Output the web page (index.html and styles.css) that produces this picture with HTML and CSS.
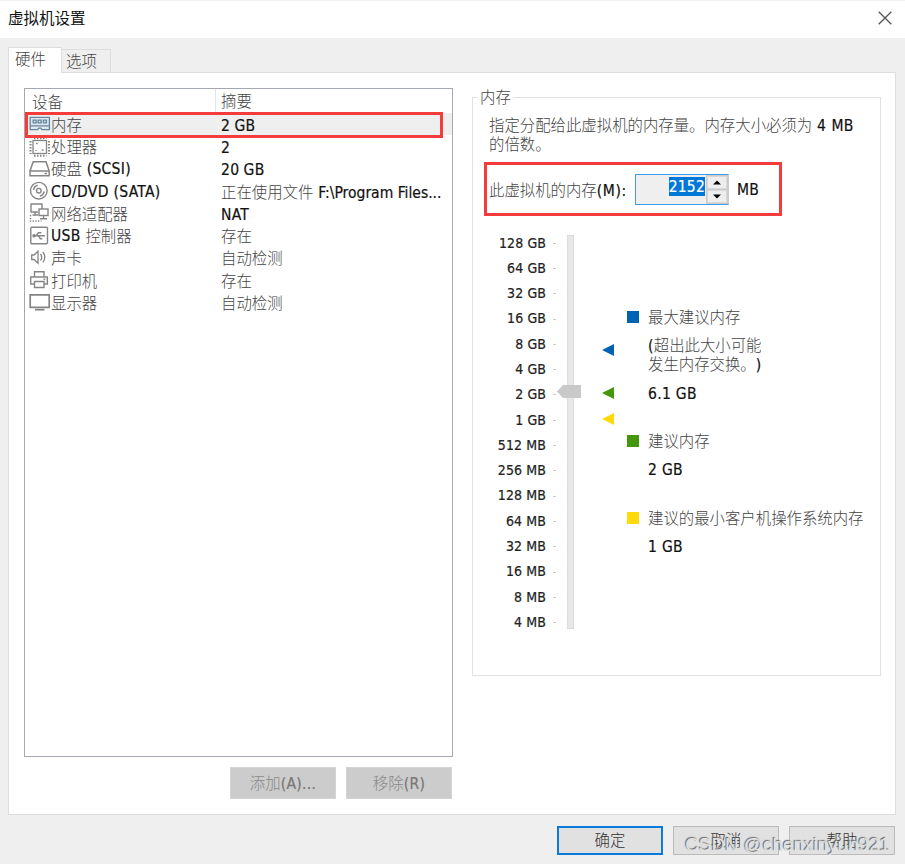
FILE: index.html
```html
<!DOCTYPE html>
<html lang="zh-CN">
<head>
<meta charset="utf-8">
<title>虚拟机设置</title>
<link rel="stylesheet" href="styles.css">
</head>
<body>
<div class="dialog">
  <header class="titlebar"><h1>虚拟机设置</h1>
    <svg class="close" width="14" height="14" viewBox="0 0 14 14"><path d="M.7.7l12.6 12.6M13.3.7L.7 13.3" stroke="#555" stroke-width="1.3"/></svg>
  </header>
  <nav class="tabs"><div class="tab active">硬件</div><div class="tab">选项</div></nav>
  <main class="panel">
    <section class="devices">
      <div class="list">
        <div class="row head"><span class="name">设备</span><span class="sum">摘要</span></div>
        <div class="row selected"><span class="name"><svg class="ic" viewBox="0 0 22 20"><g fill="none" stroke="#66869c" stroke-width="1.3"><path d="M1.2 3.4h19.2v12.3H13l-1.2-1.5h-2L8.6 15.7H1.2z" fill="#dde8f0"/><path d="M4.2 6.2h3v2.6h-3zM9.2 6.2h3v2.6h-3zM14.4 6.2h3v2.6h-3zM1.2 11.9h19"/></g></svg>内存</span><span class="sum"><b>2 GB</b></span></div>
        <div class="row"><span class="name"><svg class="ic" viewBox="0 0 22 20"><g fill="none" stroke="#858585" stroke-width="1.3"><rect x="4" y="3.5" width="13.5" height="13"/><path stroke-dasharray="1.5 1.5" stroke-width="2" d="M5 1.2h12.5M5 18.8h12.5M1.5 4v13M20 4v13"/><path d="M7 6.5h1.6M12.8 13h1.8M7 13v1"/></g></svg>处理器</span><span class="sum"><b>2</b></span></div>
        <div class="row"><span class="name"><svg class="ic" viewBox="0 0 22 20"><path d="M4.2 2.7h12.8L20.2 12v4.7H1V12zM1 12h19.2M15.5 14.5H18" fill="none" stroke="#858585" stroke-width="1.5"/></svg>硬盘 <b>(SCSI)</b></span><span class="sum"><b>20 GB</b></span></div>
        <div class="row"><span class="name"><svg class="ic" viewBox="0 0 22 20"><g fill="none" stroke="#858585" stroke-width="1.4"><circle cx="9.8" cy="9.7" r="8.3"/><circle cx="9.8" cy="9.7" r="2.3"/><path d="M4.5 9q.7-4 4.2-4.8M15.2 10.5q-.8 3.7-4.3 4.6"/></g></svg><b class="cd">CD/DVD (SATA)</b></span><span class="sum">正在使用文件 <b class="file">F:\Program Files...</b></span></div>
        <div class="row"><span class="name"><svg class="ic" viewBox="0 0 22 20"><g fill="none" stroke="#858585" stroke-width="1.4"><path d="M9 9H2V1h11v5M6 9v3M3.5 12H9"/><rect x="10" y="6" width="9" height="6.5"/><path d="M14.5 12.5v3M11 15.7h7"/><path stroke-dasharray="1.3 1.4" d="M1.5 12v6h11"/></g></svg>网络适配器</span><span class="sum"><b>NAT</b></span></div>
        <div class="row"><span class="name"><svg class="ic" viewBox="0 0 22 20"><g fill="none" stroke="#858585" stroke-width="1.4"><rect x="1.8" y="1.3" width="16.7" height="16.5" rx="1"/><path d="M5 9.7h11M7.3 9.7l2-3h3M9.3 9.7l2 3h2"/><circle cx="5" cy="9.7" r="1" fill="#858585"/></g></svg><b>USB</b> 控制器</span><span class="sum">存在</span></div>
        <div class="row"><span class="name"><svg class="ic" viewBox="0 0 22 20"><path d="M2.7 7H5l4-3.8v12L5 11.5H2.7zM11.5 6q2.5 3.3 0 6.5M13.8 4q4 5.2 0 10.3" fill="none" stroke="#858585" stroke-width="1.3"/></svg>声卡</span><span class="sum">自动检测</span></div>
        <div class="row"><span class="name"><svg class="ic" viewBox="0 0 22 20"><g fill="none" stroke="#858585" stroke-width="1.4"><path d="M5.5 7V1.8H15V7M5.5 14H1.7V7h16.6v7H15"/><path d="M5.5 11.5H15v6H5.5z"/><path d="M14.5 9.2h1.8"/></g></svg>打印机</span><span class="sum">存在</span></div>
        <div class="row"><span class="name"><svg class="ic" viewBox="0 0 22 20"><path d="M1.2 1.8h19v12.5h-19z" fill="none" stroke="#858585" stroke-width="1.7"/><path d="M6 16.7h9.5" stroke="#858585" stroke-width="1.8"/></svg>显示器</span><span class="sum">自动检测</span></div>
        <div class="mark"></div>
      </div>
      <div class="actions"><button class="flat">添加<b>(A)...</b></button><button class="flat">移除<b>(R)</b></button></div>
    </section>
    <section class="group">
      <h2>内存</h2>
      <p class="desc">指定分配给此虚拟机的内存量。内存大小必须为 <b>4 MB</b><br>的倍数。</p>
      <div class="amount">
        <span class="label">此虚拟机的内存<b>(M):</b></span>
        <div class="spin"><span class="field"><b>2152</b></span><span class="arrows"><i><svg width="8" height="5"><path d="M0 4.5L4 .5l4 4z"/></svg></i><i><svg width="8" height="5"><path d="M0 .5h8l-4 4z"/></svg></i></span></div>
        <b class="unit">MB</b>
      </div>
      <div class="scale">
        <div class="steps"><b>128 GB</b><b>64 GB</b><b>32 GB</b><b>16 GB</b><b>8 GB</b><b>4 GB</b><b>2 GB</b><b>1 GB</b><b>512 MB</b><b>256 MB</b><b>128 MB</b><b>64 MB</b><b>32 MB</b><b>16 MB</b><b>8 MB</b><b>4 MB</b></div>
        <div class="track"><svg class="thumb" width="24" height="13"><path d="M0 6.5L6 0h18v13H6z" fill="#c9c9c9"/></svg></div>
        <svg class="pointers" width="12" height="394"><path d="M0 115l12-6v12z" fill="#0063b1"/><path d="M0 158l12-6v12z" fill="#44960c"/><path d="M0 184l12-6v12z" fill="#ffd90a"/></svg>
        <div class="legend">
          <div class="item max"><i></i><div><p>最大建议内存</p><p class="note"><b>(</b>超出此大小可能<br>发生内存交换。<b>)</b></p><p><b>6.1 GB</b></p></div></div>
          <div class="item rec"><i></i><div><p>建议内存</p><p><b>2 GB</b></p></div></div>
          <div class="item min"><i></i><div><p>建议的最小客户机操作系统内存</p><p><b>1 GB</b></p></div></div>
        </div>
      </div>
    </section>
  </main>
  <footer class="footer"><button class="ok">确定</button><button>取消</button><button>帮助</button></footer>
  <div class="watermark">CSDN @chenxinyun921</div>
</div>
</body>
</html>
```

FILE: styles.css
```css
* { box-sizing: border-box; }
body { margin: 0; background: #efefef; font: 300 15.4px/20px "Noto Sans CJK SC", sans-serif; color: #444; text-spacing-trim: space-all; }
b { font: 15.5px/14px "DejaVu Sans Condensed", "Noto Sans", sans-serif; color: #111; letter-spacing: .3px; -webkit-text-stroke: .2px currentColor; }
h1, h2, p { margin: 0; font-weight: inherit; }
i { display: block; font-style: normal; }
.dialog { position: relative; width: 905px; height: 864px; overflow: hidden; }
.titlebar { height: 38px; background: #fff; border-top: 1px solid #f0f0f0; display: flex; justify-content: space-between; align-items: center; padding: 0 13px 3px 8px; }
.titlebar h1 { font-size: 15.5px; font-weight: 400; color: #111; margin-top: -2px; }
.tabs { height: 34px; padding: 9px 0 0 8px; display: flex; align-items: flex-end; }
.tab { height: 23px; width: 49px; padding: 0 0 0 4px; border: 1px solid #ddd; border-left: 0; border-bottom: 0; white-space: nowrap; }
.tab.active { width: 54px; height: 26px; margin-bottom: -1px; padding: 0 0 0 6px; background: #fff; border-left: 1px solid #ddd; position: relative; }
.panel { margin: 0 9px 0 8px; height: 743px; background: #fff; border: 1px solid #ddd; display: flex; padding: 15px 13px 0 15px; }
.devices { width: 429px; }
.list { position: relative; height: 669px; border: 1px solid #a3a8b3; background: #fff; }
.row { height: 22.3px; display: flex; align-items: center; white-space: nowrap; line-height: 18px; padding-bottom: 1px; }
.row.head { height: 24px; padding: 0; }
.head .name { padding: 0 0 0 7px; }
.head .sum { border-left: 1px solid #e4e4e4; height: 24px; line-height: 23px; padding-left: 5px; }
.row.selected { background: #efefef; }
.name { width: 190px; padding-left: 4px; display: flex; align-items: center; white-space: pre; word-spacing: 1.5px; }
.name b { padding-top: 2px; word-spacing: 0; }
.ic { width: 22px; height: 20px; flex: none; margin-left: -.5px; margin-right: .5px; position: relative; top: .6px; }
.sum { padding-left: 6px; word-spacing: 1.5px; }
.sum b { word-spacing: -.5px; }
.mark { position: absolute; border: 3px solid #f53c3c; left: 0; top: 23px; width: 418px; height: 26px; }
.sum .file { letter-spacing: 0; word-spacing: 0; }
.actions { display: flex; justify-content: flex-end; gap: 10px; margin: 10px 1px 0 0; }
button { width: 106px; height: 29px; border: 1px solid #bbb; background: #e1e1e1; padding: 0 0 3px; font: inherit; color: #333; }
.flat { height: 32px; background: #ccc; border-color: #d4d4d4; color: #888; padding: 0 0 2px; }
.flat b { color: #777; }
.group { width: 409px; height: 579px; margin: 9px 0 0 19px; border: 1px solid #e1e1e1; }
.group h2 { font-size: 15.4px; width: max-content; margin: -12px 0 0 5px; background: #fff; padding: 0 2px; }
.desc { height: 38px; margin: 9px 0 0 16px; line-height: 19px; white-space: nowrap; word-spacing: 1.5px; }
.desc b { word-spacing: .5px; }
.amount { margin: 9px 0 0 11px; width: 298px; height: 54px; border: 3px solid #f53c3c; display: flex; align-items: center; padding-left: 2px; }
.label { width: 146px; white-space: nowrap; }
.label b { letter-spacing: .6px; }
.spin { display: flex; width: 94px; height: 31px; border: 1px solid #3e9be6; border-right-color: #ccc; background: #efefef; }
.field { flex: 1; display: flex; justify-content: flex-end; padding-top: 2px; }
.field b { background: #0078d7; color: #fff; height: 19px; line-height: 20px; letter-spacing: .2px; }
.arrows { width: 22px; padding: 1px; background: #ccc; display: flex; flex-direction: column; gap: 1px; margin-left: 1px; }
.arrows i { flex: 1; background: #eee; border: 1px solid #d8d8d8; display: flex; align-items: center; justify-content: center; }
.unit { margin: 2px 0 0 8px; }
.scale { display: flex; margin-top: 19px; height: 394px; }
.steps { width: 83px; margin-top: -4.5px; display: flex; flex-direction: column; }
.steps b { height: 25.3px; line-height: 25.3px; font-size: 14px; letter-spacing: .1px; text-align: right; padding-right: 10px; color: #222; background: linear-gradient(#ccc, #ccc) no-repeat right 0 center / 3px 1px; }
.track { position: relative; width: 7px; margin-left: 11px; background: #e6e8e8; border: 1px solid #dcdede; }
.thumb { position: absolute; left: -11px; top: 149px; }
.pointers { margin-left: 28px; }
.legend { margin: 71px 0 0 13px; white-space: nowrap; }
.item { display: flex; }
.item > i { width: 12px; height: 12px; margin: 5px 9px 0 0; }
.item p { height: 20px; }
.item p + p { margin-top: 8px; }
.item p.note { height: 38px; line-height: 19px; margin: 9px 0 9px; }
.max i { background: #0063b1; } .rec i { background: #44960c; } .min i { background: #ffd90a; }
.rec { margin-top: 28px; } .min { margin-top: 29px; }
.footer { display: flex; justify-content: flex-end; gap: 10px; padding: 11px 10px 0 0; }
.ok { border: 2px solid #0a7bd8; }
.watermark { position: absolute; right: 15px; top: 834px; font: 18.8px/22px "Liberation Sans", sans-serif; color: #e2e2e2; text-shadow: -1px -1px 1px #666; letter-spacing: .05px; white-space: nowrap; }
```
